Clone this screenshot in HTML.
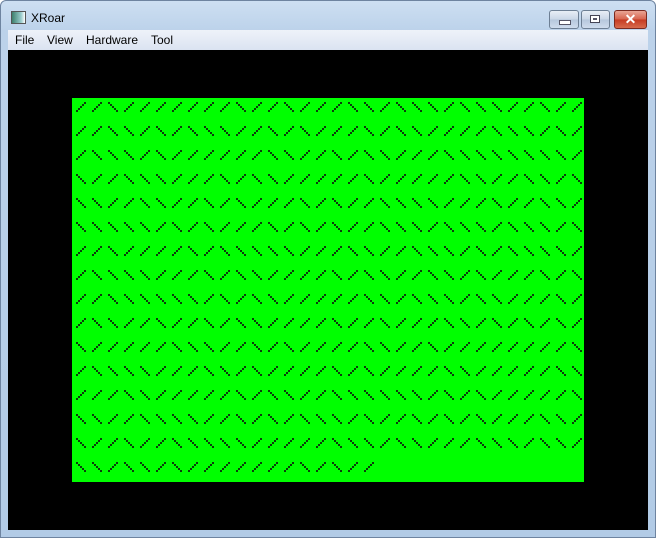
<!DOCTYPE html>
<html><head><style>
html,body{margin:0;padding:0;width:656px;height:538px;overflow:hidden;font-family:"Liberation Sans",sans-serif}
#win{position:absolute;left:0;top:0;width:654px;height:536px;border:1px solid #6e84a0;border-radius:6px 6px 0 0;background:linear-gradient(#cddff2 0,#bcd2ea 30px,#b2cbe6 100%)}
#title{position:absolute;left:30px;top:10px;font-size:12px;color:#000}
#ico{position:absolute;left:10px;top:10px;width:13px;height:11px;border:1px solid #555;background:linear-gradient(90deg,#3d7f6c,#9cc 70%,#fff)}
.btn{position:absolute;top:9px;height:17px;border:1px solid #6d7f94;border-radius:3px;background:linear-gradient(#e8eef6,#c9d6e6 50%,#b6c7dc 51%,#cfdced)}
#menu{position:absolute;left:8px;top:30px;width:640px;height:20px;background:linear-gradient(#eef2f9,#dbe3f1);font-size:12px}
#menu span{position:absolute;top:3px}
#scr{position:absolute;left:8px;top:50px;width:640px;height:480px;background:#000}
#g{position:absolute;left:64px;top:48px;width:512px;height:384px;background:#00ff00}
</style></head><body>
<div id="win">
<div id="ico"></div>
<div id="title">XRoar</div>
<div class="btn" style="left:548px;width:28px"><div style="position:absolute;left:9px;top:9px;width:10px;height:3px;background:#fff;border:1px solid #556"></div></div>
<div class="btn" style="left:580px;width:27px"><div style="position:absolute;left:8px;top:4px;width:8px;height:6px;border:1px solid #445;background:#fff;box-shadow:inset 0 0 0 2px #fff,inset 0 0 0 3px #556"></div></div>
<div class="btn" style="left:613px;width:31px;border-color:#7a2a20;background:linear-gradient(#e9a595,#d7634d 50%,#c53a22 51%,#d86a4c);color:#fff;font-weight:bold;font-size:14px;text-align:center;line-height:17px">✕</div>
</div>
<div id="menu"><span style="left:7px">File</span><span style="left:39px">View</span><span style="left:78px">Hardware</span><span style="left:143px">Tool</span></div>
<div id="scr"><svg id="g" width="512" height="384" viewBox="0 0 512 384">
<defs>
<g id="f" fill="#0b3b0b"><rect x="4" y="12" width="2" height="2"/><rect x="6" y="10" width="2" height="2"/><rect x="8" y="8" width="2" height="2"/><rect x="10" y="6" width="2" height="2"/><rect x="12" y="4" width="2" height="2"/></g>
<g id="b" fill="#0b3b0b"><rect x="4" y="4" width="2" height="2"/><rect x="6" y="6" width="2" height="2"/><rect x="8" y="8" width="2" height="2"/><rect x="10" y="10" width="2" height="2"/><rect x="12" y="12" width="2" height="2"/></g>
</defs>
<rect width="512" height="384" fill="#00ff00"/>
<g id="cells"></g>
</svg></div>
<script>
var rows=[
"//\\///////\\//\\///\\\\/\\\\\\/\\\\\\//\\//",
"//\\\\/\\/\\\\\\//\\/\\///\\/\\\\////\\\\\\/\\/",
"/\\\\\\/\\//////\\\\//\\/\\\\///\\\\\\\\\\\\\\\\/",
"\\//\\\\\\///\\/\\\\/////\\/////\\\\//\\\\/\\",
"\\\\//\\\\//\\/\\///\\/\\//\\\\\\\\///\\//\\\\/",
"\\\\\\\\\\/\\/\\///\\/\\/\\//\\\\\\/\\\\\\/\\\\\\/\\",
"//\\////\\/\\\\\\\\\\///\\\\//\\\\\\/\\/\\\\\\\\/",
"/\\\\\\\\///\\/\\\\////\\/\\\\//\\\\/\\///\\/\\",
"//\\\\\\\\\\\\/\\/\\\\/////\\\\/\\\\\\/\\\\///\\/",
"/\\\\//\\//\\/\\\\////\\//\\///\\\\/\\/\\/\\/",
"\\/////\\\\\\//\\/\\////\\\\//\\////////\\",
"/\\\\\\\\///\\\\/\\////\\/\\////\\\\/////\\\\",
"///\\\\/////\\/\\\\//\\\\\\\\\\\\/\\/\\/////\\",
"\\\\//\\\\\\\\//\\/\\/\\\\\\/\\//\\/\\/\\///\\\\/",
"\\//\\//\\\\\\\\\\/////\\\\\\/\\\\///\\\\\\/\\\\",
"\\\\/\\\\/\\///////\\/\\//"
];
var s="";
for(var r=0;r<rows.length;r++){var row=rows[r];if(r<15){while(row.length<32)row+="/";}
for(var c=0;c<row.length&&c<32;c++){s+='<use href="#'+(row[c]=="/"?"f":"b")+'" x="'+(c*16)+'" y="'+(r*24)+'"/>';}}
document.getElementById("cells").innerHTML=s;
</script>
</body></html>
